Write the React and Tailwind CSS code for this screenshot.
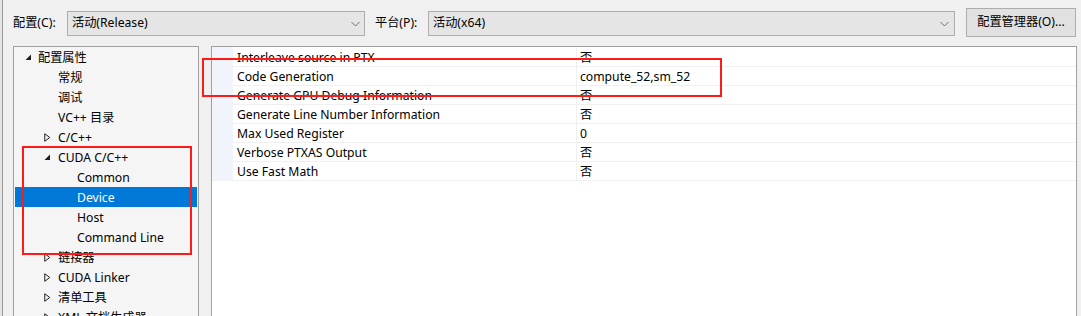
import React from "react";

const FONT = { fontFamily: '"Noto Sans", "Noto Sans CJK SC", sans-serif' };

function Filled() {
  return (
    <svg width="7" height="7" viewBox="0 0 7 7" className="shrink-0">
      <polygon points="6,0.5 6,6 0.5,6" fill="#1e1e1e" />
    </svg>
  );
}
function Outline() {
  return (
    <svg width="7" height="9" viewBox="0 0 7 9" className="shrink-0">
      <polygon points="0.75,0.75 0.75,8.25 5.75,4.5" fill="none" stroke="#1e1e1e" strokeWidth="1" />
    </svg>
  );
}

function Chevron() {
  return (
    <svg width="9" height="6" viewBox="0 0 9 6" className="shrink-0">
      <polyline points="0.5,1 4.5,5 8.5,1" fill="none" stroke="#707070" strokeWidth="1" />
    </svg>
  );
}

const tree = [
  { label: "配置属性", icon: "filled", level: 0 },
  { label: "常规", level: 1 },
  { label: "调试", level: 1 },
  { label: "VC++ 目录", level: 1 },
  { label: "C/C++", icon: "outline", level: 1 },
  { label: "CUDA C/C++", icon: "filled", level: 1 },
  { label: "Common", level: 2 },
  { label: "Device", level: 2, selected: true },
  { label: "Host", level: 2 },
  { label: "Command Line", level: 2 },
  { label: "链接器", icon: "outline", level: 1 },
  { label: "CUDA Linker", icon: "outline", level: 1 },
  { label: "清单工具", icon: "outline", level: 1 },
  { label: "XML 文档生成器", icon: "outline", level: 1 },
];

const props = [
  ["Interleave source in PTX", "否"],
  ["Code Generation", "compute_52,sm_52"],
  ["Generate GPU Debug Information", "否"],
  ["Generate Line Number Information", "否"],
  ["Max Used Register", "0"],
  ["Verbose PTXAS Output", "否"],
  ["Use Fast Math", "否"],
];

function TreeRow({ item }) {
  const textLeft = item.level === 0 ? "pl-[23px]" : item.level === 1 ? "pl-[43px]" : "pl-[62px]";
  const iconLeft = item.level === 0 ? "left-[10px]" : "left-[29px]";
  return (
    <div
      className={
        "relative flex h-[20px] items-center pt-[2px] " +
        textLeft +
        (item.selected ? " bg-[#0078d7] text-white" : " text-black")
      }
    >
      {item.icon && (
        <span className={"absolute top-0 flex h-[20px] items-center pt-[1px] " + iconLeft}>
          {item.icon === "filled" ? <Filled /> : <Outline />}
        </span>
      )}
      <span className="whitespace-nowrap leading-none">{item.label}</span>
    </div>
  );
}

export default function App() {
  return (
    <div
      className="relative flex h-[316px] w-[1081px] overflow-hidden bg-[#f0f0f0] text-[12.2px] text-black"
      style={FONT}
    >
      <div className="w-[3px] shrink-0 border-r border-[#9a9a9a] bg-[#e4e4e4]" />
      <div className="flex min-w-0 flex-1 flex-col">
        {/* top bar */}
        <div className="flex h-[46px] shrink-0 items-start pl-[10px] pt-[8px]">
          <div className="flex h-[29px] w-[54px] items-center pt-[1px]">配置(C):</div>
          <div className="mt-[3px] flex h-[25px] w-[298px] items-center justify-between border border-[#adadad] bg-[#e5e5e5] pl-[4px] pr-[4px]">
            <span>活动(Release)</span>
            <Chevron />
          </div>
          <div className="ml-[10px] flex h-[29px] w-[53px] items-center pt-[1px]">平台(P):</div>
          <div className="mt-[3px] flex h-[25px] w-[527px] items-center justify-between border border-[#adadad] bg-[#e5e5e5] pl-[4px] pr-[5px]">
            <span>活动(x64)</span>
            <Chevron />
          </div>
          <div className="ml-[11px] flex h-[29px] w-[110px] items-center justify-center border border-[#adadad] bg-[#e1e1e1]">
            配置管理器(O)...
          </div>
        </div>
        {/* main */}
        <div className="flex min-h-0 flex-1 pl-[10px]">
          <div className="h-[300px] w-[186px] shrink-0 border border-[#a0a0a0] bg-[#f5f5f5] px-[1px]">
            {tree.map((t) => (
              <TreeRow key={t.label} item={t} />
            ))}
          </div>
          <div className="ml-[12px] h-[300px] w-[866px] shrink-0 border border-[#a0a0a0] bg-white">
            <div className="flex">
              <div className="h-[134px] w-[21px] shrink-0 bg-[#f1f4fa]" />
              <div className="min-w-0 flex-1 pt-[1px]">
                {props.map(([k, v]) => (
                  <div key={k} className="flex h-[19px] items-center border-b border-[#f0f0f0]">
                    <div className="flex h-full w-[343px] shrink-0 items-center pl-[4px] pt-[2px]">{k}</div>
                    <div className="flex h-full flex-1 items-center border-l border-[#f0f0f0] pl-[3px] pt-[2px]">{v}</div>
                  </div>
                ))}
              </div>
            </div>
          </div>
        </div>
      </div>

      {/* annotation boxes */}
      <div className="pointer-events-none absolute left-[202px] top-[58px] h-[39px] w-[520px] border-2 border-[#ff1a1a]" />
      <div className="pointer-events-none absolute left-[22px] top-[146px] h-[109px] w-[170px] border-2 border-[#ff1a1a]" />
    </div>
  );
}
